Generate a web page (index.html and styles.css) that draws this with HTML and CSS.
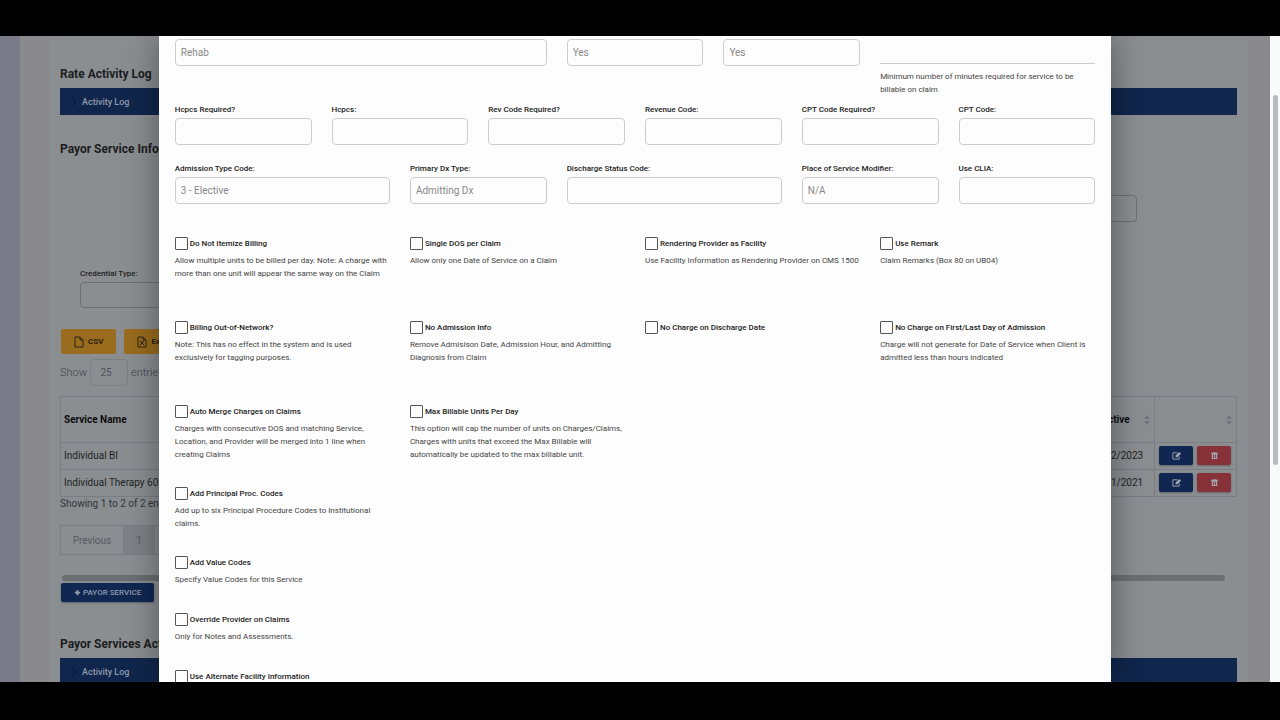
FILE: index.html
```
<!DOCTYPE html>
<html lang="en">
<head>
    <meta charset="utf-8">
    <meta name="viewport" content="width=device-width">
    <title>Payor Services</title>
    <link rel="stylesheet" href="styles.css">
</head>
<body>
    <div class="viewport">
        <!-- page behind the modal -->
        <div class="side"></div>
        <main class="page">
            <div class="card">
                <h2>Rate Activity Log</h2>
                <button class="bar" type="button">
                    <svg viewBox="0 0 8 10"><path d="M2 1l4 4-4 4"/></svg>Activity Log
                </button>

                <h2 class="info-title">Payor Service Information</h2>
                <div class="filters">
                    <input type="text" aria-label="Service filter">
                </div>
                <div class="credential">
                    <label for="credential">Credential Type:</label>
                    <input type="text" id="credential">
                </div>

                <div class="exports">
                    <button type="button">
                        <svg viewBox="0 0 10 12"><path d="M1 1h5l3 3v7H1zM6 1v3h3"/></svg>CSV
                    </button>
                    <button type="button">
                        <svg viewBox="0 0 10 12"><path d="M1 1h5l3 3v7H1zM6 1v3h3M3 5l4 4M7 5l-4 4"/></svg>Excel
                    </button>
                </div>
                <div class="length">
                    <label for="length">Show</label>
                    <input type="text" id="length" value="25">
                    <span>entries</span>
                </div>

                <table>
                    <thead>
                        <tr>
                            <th>Service Name</th>
                            <th class="date">Effective<svg class="sort" viewBox="0 0 6 10"><path d="M3 0l3 4H0zM3 10l3-4H0z"/></svg></th>
                            <th class="actions"><svg class="sort" viewBox="0 0 6 10"><path d="M3 0l3 4H0zM3 10l3-4H0z"/></svg></th>
                        </tr>
                    </thead>
                    <tbody>
                        <tr>
                            <td>Individual BI</td>
                            <td>01/12/2023</td>
                            <td>
                                <div class="row-buttons">
                                    <button class="edit" type="button" aria-label="Edit"><svg viewBox="0 0 10 10"><path d="M6 2H1v7h7V6"/><path class="solid" d="M4 7l0-2 4-4 2 2-4 4z"/></svg></button>
                                    <button class="delete" type="button" aria-label="Delete"><svg viewBox="0 0 10 10"><path class="solid" d="M1 2h8v1H1zM4 1h2v1H4zM2 3h6v6H2z"/><path class="slot" d="M4 4v4M6 4v4"/></svg></button>
                                </div>
                            </td>
                        </tr>
                        <tr>
                            <td>Individual Therapy 60</td>
                            <td>01/01/2021</td>
                            <td>
                                <div class="row-buttons">
                                    <button class="edit" type="button" aria-label="Edit"><svg viewBox="0 0 10 10"><path d="M6 2H1v7h7V6"/><path class="solid" d="M4 7l0-2 4-4 2 2-4 4z"/></svg></button>
                                    <button class="delete" type="button" aria-label="Delete"><svg viewBox="0 0 10 10"><path class="solid" d="M1 2h8v1H1zM4 1h2v1H4zM2 3h6v6H2z"/><path class="slot" d="M4 4v4M6 4v4"/></svg></button>
                                </div>
                            </td>
                        </tr>
                    </tbody>
                </table>
                <p class="showing">Showing 1 to 2 of 2 entries</p>
                <div class="pages">
                    <button type="button">Previous</button>
                    <button class="current" type="button">1</button>
                </div>
                <div class="hscroll"></div>
                <button class="add" type="button">
                    <svg viewBox="0 0 8 8"><path d="M4 1v6M1 4h6"/></svg>PAYOR SERVICE
                </button>

                <h2 class="log-title">Payor Services Activity Log</h2>
                <button class="bar" type="button">
                    <svg viewBox="0 0 8 10"><path d="M2 1l4 4-4 4"/></svg>Activity Log
                </button>
            </div>
        </main>

        <!-- modal -->
        <div class="overlay">
            <form class="modal">
                <div class="fields first">
                    <div class="w5"><input type="text" value="Rehab" aria-label="Service type"></div>
                    <div class="w2"><input type="text" value="Yes" aria-label="Billable"></div>
                    <div class="w2"><input type="text" value="Yes" aria-label="Active"></div>
                    <div class="w3">
                        <input class="line" type="text" id="minutes" aria-label="Minimum minutes">
                        <p>Minimum number of minutes required for service to be billable on claim</p>
                    </div>
                </div>
                <div class="fields">
                    <div class="w2"><label for="f1">Hcpcs Required?</label><input type="text" id="f1"></div>
                    <div class="w2"><label for="f2">Hcpcs:</label><input type="text" id="f2"></div>
                    <div class="w2"><label for="f3">Rev Code Required?</label><input type="text" id="f3"></div>
                    <div class="w2"><label for="f4">Revenue Code:</label><input type="text" id="f4"></div>
                    <div class="w2"><label for="f5">CPT Code Required?</label><input type="text" id="f5"></div>
                    <div class="w2"><label for="f6">CPT Code:</label><input type="text" id="f6"></div>
                </div>
                <div class="fields">
                    <div class="w3"><label for="f7">Admission Type Code:</label><input type="text" id="f7" value="3 - Elective"></div>
                    <div class="w2"><label for="f8">Primary Dx Type:</label><input type="text" id="f8" value="Admitting Dx"></div>
                    <div class="w3"><label for="f9">Discharge Status Code:</label><input type="text" id="f9"></div>
                    <div class="w2"><label for="f10">Place of Service Modifier:</label><input type="text" id="f10" value="N/A"></div>
                    <div class="w2"><label for="f11">Use CLIA:</label><input type="text" id="f11"></div>
                </div>

                <div class="checks">
                    <div class="check tall">
                        <label><input type="checkbox">Do Not Itemize Billing</label>
                        <p>Allow multiple units to be billed per day. Note: A charge with more than one unit will appear the same way on the Claim</p>
                    </div>
                    <div class="check tall">
                        <label><input type="checkbox">Single DOS per Claim</label>
                        <p>Allow only one Date of Service on a Claim</p>
                    </div>
                    <div class="check tall">
                        <label><input type="checkbox">Rendering Provider as Facility</label>
                        <p>Use Facility Information as Rendering Provider on CMS 1500</p>
                    </div>
                    <div class="check tall">
                        <label><input type="checkbox">Use Remark</label>
                        <p>Claim Remarks (Box 80 on UB04)</p>
                    </div>
                    <div class="check tall">
                        <label><input type="checkbox">Billing Out-of-Network?</label>
                        <p>Note: This has no effect in the system and is used exclusively for tagging purposes.</p>
                    </div>
                    <div class="check tall">
                        <label><input type="checkbox">No Admission Info</label>
                        <p>Remove Admisison Date, Admission Hour, and Admitting Diagnosis from Claim</p>
                    </div>
                    <div class="check tall">
                        <label><input type="checkbox">No Charge on Discharge Date</label>
                    </div>
                    <div class="check tall">
                        <label><input type="checkbox">No Charge on First/Last Day of Admission</label>
                        <p>Charge will not generate for Date of Service when Client is admitted less than hours indicated</p>
                    </div>
                    <div class="check start">
                        <label><input type="checkbox">Auto Merge Charges on Claims</label>
                        <p>Charges with consecutive DOS and matching Service, Location, and Provider will be merged into 1 line when creating Claims</p>
                    </div>
                    <div class="check">
                        <label><input type="checkbox">Max Billable Units Per Day</label>
                        <p>This option will cap the number of units on Charges/Claims, Charges with units that exceed the Max Billable will automatically be updated to the max billable unit.</p>
                    </div>
                    <div class="check start">
                        <label><input type="checkbox">Add Principal Proc. Codes</label>
                        <p>Add up to six Principal Procedure Codes to Institutional claims.</p>
                    </div>
                    <div class="check start">
                        <label><input type="checkbox">Add Value Codes</label>
                        <p>Specify Value Codes for this Service</p>
                    </div>
                    <div class="check start">
                        <label><input type="checkbox">Override Provider on Claims</label>
                        <p>Only for Notes and Assessments.</p>
                    </div>
                    <div class="check start">
                        <label><input type="checkbox">Use Alternate Facility Information</label>
                    </div>
                </div>
            </form>
        </div>

        <div class="scrollbar"><div class="thumb"></div></div>
    </div>
</body>
</html>
```
FILE: styles.css
```
* {margin: 0; padding: 0; box-sizing: border-box;}
body {background: #000; font: 10px/14px Roboto, sans-serif; color: #222;}
input, button {font-family: inherit;}
button {border: 0; cursor: pointer;}
svg {fill: none; stroke: currentColor;}

.viewport {position: relative; display: grid; grid-template-columns: 20px 1fr 10px; height: 100vh; border-top: 36px solid #000; border-bottom: 38px solid #000; overflow: hidden;}
.side {background: #797c88;}
.page {background: #89898e; padding: 0 23px 0 30px; overflow: hidden;}
.scrollbar {background: #f8fafb; padding: 59px 2px 0 3px;}
.thumb {height: 370px; border-radius: 3px; background: #b9bcbe;}

/* page */
.card {background: #8b8e91; padding: 28px 10px 0; min-height: 100%;}
.card h2 {font-size: 12px; font-weight: 700; line-height: 20px; color: #1b1d21; margin-bottom: 4px;}
.card .info-title {margin: 24px 0 36px;}
.card .log-title {margin-top: 32px;}
.bar {display: flex; align-items: center; gap: 4px; width: 100%; height: 27px; padding-left: 10px; background: #10264c; color: #919cae; font-size: 9px; font-weight: 500; line-height: 14px;}
.bar svg {width: 8px; height: 10px; stroke: #061330;}
.card input {background: transparent; border: 1px solid #6c6f74; border-radius: 4px;}
.filters {display: flex; justify-content: flex-end; padding-right: 100px; margin-bottom: 46px;}
.filters input {width: 25%; height: 27px;}
.credential {padding-left: 20px; font-size: 8px; font-weight: 500; line-height: 12px;}
.credential label {display: block; margin-bottom: 2px;}
.credential input {display: block; width: 25%; height: 26px;}

.exports {display: flex; gap: 8px; padding-left: 1px; margin-top: 21px;}
.exports button {display: flex; align-items: center; gap: 4px; height: 25px; padding: 0 13px; border-radius: 2px; background: #996c1e; color: #2b2214; font-size: 8px; font-weight: 700;}
.exports svg {width: 10px; height: 12px;}
.length {display: flex; align-items: center; gap: 3px; margin: 5px 0 10px; color: #404348; font-size: 11px; font-weight: 300;}
.length input {width: 38px; height: 27px; padding-right: 6px; text-align: center; font-size: 10px; color: #505358; border-color: #7c7f84;}

table {width: 100%; table-layout: fixed; border-collapse: collapse; color: #1d1f23;}
th, td {border: 1px solid #797e85; padding: 0 3px; height: 27px; text-align: left; font-weight: 400;}
th {position: relative; height: 46px; font-weight: 700; color: #0b0c0e;}
.date {width: 68px;}
.actions {width: 82px;}
.sort {position: absolute; right: 4px; top: 18px; width: 6px; height: 10px; fill: #70747a; stroke: none;}
.row-buttons {display: flex; gap: 4px; margin: 0 0 2px 1px;}
.row-buttons button {display: flex; align-items: center; justify-content: center; width: 34px; height: 19px; border-radius: 2px; color: #a3a7b0; box-shadow: 0 1px 2px rgba(0,0,0,0.3);}
.row-buttons .edit {background: #102751;}
.row-buttons .delete {background: #873239;}
.row-buttons svg {width: 9px; height: 9px;}
.solid {fill: currentColor; stroke: none;}
.slot {stroke: #873239; stroke-width: 1;}
.showing {color: #303338;}

.pages {display: flex; width: 220px; height: 30px; margin: 14px 0 20px; border: 1px solid #7b7e83;}
.pages button {width: 62px; background: transparent; color: #56595e; font-size: 10px;}
.pages .current {width: 32px; background: #7e8185;}
.hscroll {height: 6px; margin: 0 12px 2px 2px; border-radius: 3px; background: #6c6f72;}
.add {display: flex; align-items: center; gap: 2px; height: 19px; margin-left: 1px; padding: 0 13px; border-radius: 2px; background: #102751; color: #929cae; font-size: 8px; font-weight: 500; box-shadow: 0 1px 2px rgba(0,0,0,0.3);}
.add svg {width: 7px; height: 7px; stroke-width: 2;}

/* modal */
.overlay {position: absolute; top: 0; bottom: 0; left: 0; right: 10px;}
.modal {width: 75%; height: 100%; margin: auto; padding: 3px 16px 0; background: #fdfdfd; overflow: hidden; box-shadow: 0 0 32px rgba(0,0,0,0.4);}
.modal p {font-size: 8px; line-height: 13px; color: #444;}
.modal label {font-size: 8px; font-weight: 500; line-height: 12px;}
.fields {display: grid; grid-template-columns: repeat(12, 1fr); column-gap: 20px; margin-bottom: 18px;}
.fields.first {margin-bottom: 8px;}
.w2 {grid-column: span 2;}
.w3 {grid-column: span 3;}
.w5 {grid-column: span 5;}
.fields label {display: block; margin-bottom: 2px;}
.fields input {display: block; width: 100%; height: 27px; padding: 0 5px; border: 1px solid #ccc; border-radius: 4px; background: transparent; color: #888; font-size: 10px;}
.fields .line {height: 25px; margin-bottom: 6px; border-width: 0 0 1px; border-radius: 0;}

.checks {display: grid; grid-template-columns: repeat(4, 1fr); column-gap: 20px; margin-top: 33px;}
.check {min-height: 57px; padding-bottom: 26px;}
.tall {min-height: 84px;}
.start {grid-column-start: 1;}
.check label {display: flex; align-items: center; gap: 2px; height: 13px; margin-bottom: 4px;}
.check input {appearance: none; width: 13px; height: 13px; border: 1px solid #555; border-radius: 1px;}
```
